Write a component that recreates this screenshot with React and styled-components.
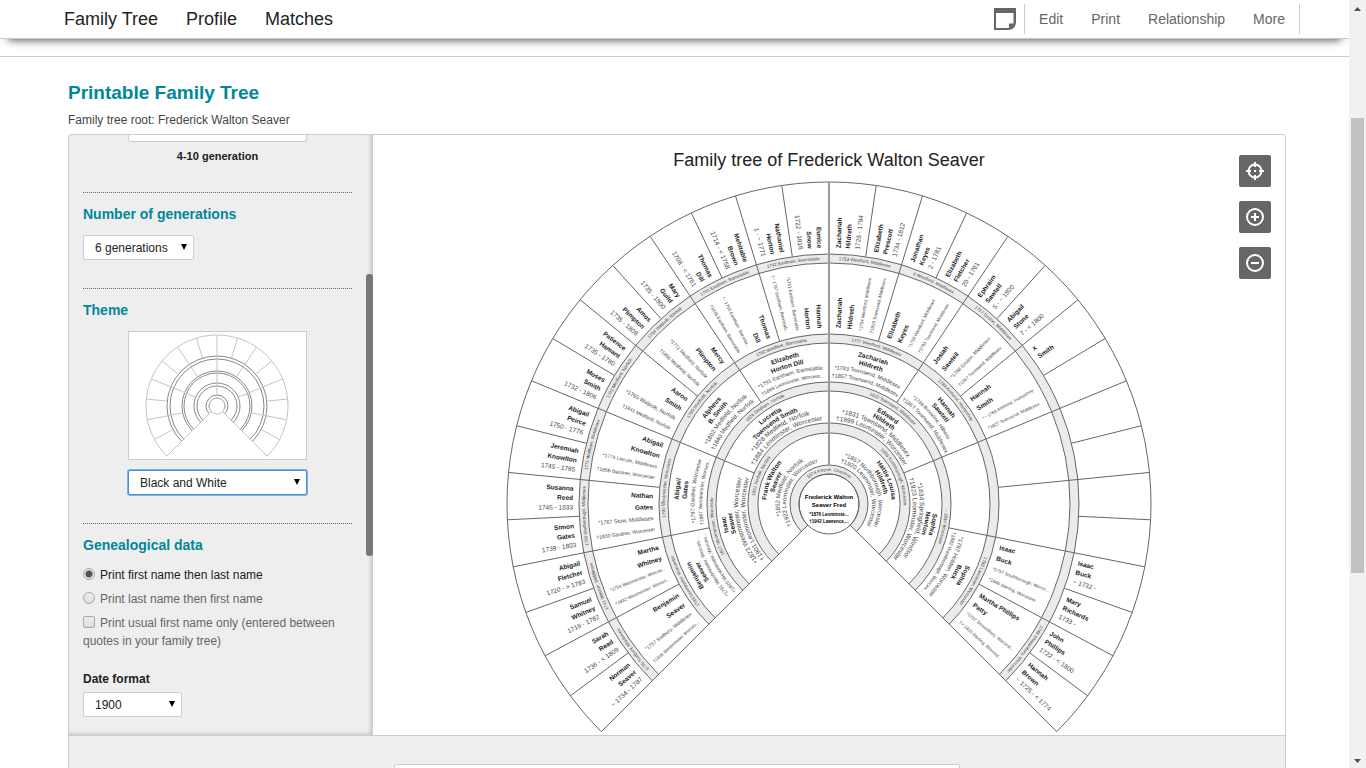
import React from 'react';
import styled, { createGlobalStyle } from 'styled-components';

const colors = {
  teal: '#00879a',
  text: '#222',
  grey: '#666',
  line: '#ccc',
  panel: '#eee',
}

const GlobalStyle = createGlobalStyle`
  * {
    box-sizing: border-box;
  }
  body {
    margin: 0;
    background: #fff;
    color: ${colors.text};
    font-family: "Liberation Sans", Arial, sans-serif;
    font-size: 12px;
  }
`

const Window = styled.div`
  display: flex;
  height: 100vh;
  overflow: hidden;
`
const Page = styled.div`
  flex: 1;
  min-width: 0;
  overflow: hidden;
`
const Header = styled.header`
  display: flex;
  align-items: center;
  justify-content: space-between;
  height: 39px;
  padding: 0 49px 0 64px;
  background: #fff;
  border-bottom: 1px solid ${colors.line};
  box-shadow: 0 9px 9px -8px rgba(0, 0, 0, 0.7);
`
const SubHeader = styled.div`
  height: 18px;
  border-bottom: 1px solid ${colors.line};
`
const MainNav = styled.nav`
  display: flex;
  gap: 28px;
`
const NavLink = styled.a`
  color: ${colors.text};
  font-size: 18px;
  line-height: 38px;
  text-decoration: none;
`
const Tools = styled.div`
  display: flex;
  align-items: center;
  gap: 8px;
`
const NoteButton = styled.button`
  width: 22px;
  height: 22px;
  padding: 0;
  border: 0;
  background: none;
`
const ToolNav = styled.nav`
  display: flex;
  gap: 28px;
  padding: 0 14px;
  border-left: 1px solid ${colors.line};
  border-right: 1px solid ${colors.line};
`
const ToolLink = styled.a`
  color: ${colors.grey};
  font-size: 14px;
  line-height: 30px;
  text-decoration: none;
`
const Content = styled.main`
  padding: 25px 63px 0 68px;
`
const PageTitle = styled.h1`
  margin: 0;
  color: ${colors.teal};
  font-size: 19px;
  line-height: 22px;
`
const RootPerson = styled.p`
  margin: 8px 0 6px;
  color: #444;
  line-height: 16px;
`
const Panel = styled.div`
  border: 1px solid ${colors.line};
  border-radius: 3px;
  overflow: hidden;
`
const Workspace = styled.div`
  display: flex;
`
const Sidebar = styled.aside`
  position: relative;
  flex: none;
  width: 304px;
  padding: 0 20px 18px 14px;
  background: ${colors.panel};
  border-right: 1px solid ${colors.line};
  box-shadow: inset -2px -2px 4px -1px rgba(0, 0, 0, 0.2);
`
const SidebarThumb = styled.div`
  position: absolute;
  top: 139px;
  right: -1px;
  width: 7px;
  height: 282px;
  border-radius: 3px;
  background: #777;
`
const Section = styled.section`
  padding: 10px 0 28px;
  border-top: 1px dotted ${colors.grey};
`
const FirstSection = styled.section`
  padding-bottom: 27px;
`
const LastSection = styled(Section)`
  padding-bottom: 0;
`
const TypePreview = styled.div`
  width: 179px;
  height: 7px;
  margin: 0 auto 6px;
  background: #fff;
  border: 1px solid ${colors.line};
  border-top: 0;
  border-radius: 0 0 3px 3px;
`
const TypeName = styled.div`
  font-size: 11px;
  font-weight: bold;
  line-height: 17px;
  text-align: center;
`
const SectionTitle = styled.h2`
  margin: 0 0 ${props => (props.$tight ? 6 : 9)}px;
  color: ${colors.teal};
  font-size: 14px;
  line-height: 23px;
`
const ThemePreview = styled.div`
  width: 179px;
  height: 129px;
  margin: 0 auto 10px;
  background: #fff;
  border: 1px solid ${colors.line};
  svg {
    display: block;
  }
`
const SelectBox = styled.div`
  position: relative;
  width: ${props => props.$width}px;
  margin: ${props => (props.$center ? '0 auto' : '0')};
  svg {
    position: absolute;
    top: 9px;
    right: 7px;
    pointer-events: none;
  }
`
const StyledSelect = styled.select`
  display: block;
  width: 100%;
  height: 25px;
  padding: 0 11px;
  appearance: none;
  background: #fff;
  border: 1px solid ${props => (props.$active ? '#4a90d9' : colors.line)};
  border-radius: 2px;
  box-shadow: ${props => (props.$active ? '0 0 0 1px #7fb2e8' : 'none')};
  color: ${colors.text};
  font-family: inherit;
  font-size: 12px;
  outline: 0;
`
const Option = styled.label`
  display: block;
  padding: 3px 0;
  color: ${props => (props.$active ? colors.text : colors.grey)};
  line-height: 18px;
`
const Tick = styled.input`
  appearance: none;
  width: 12px;
  height: 12px;
  margin: 0 5px 0 0;
  vertical-align: -1px;
  border: 1px solid #aaa;
  border-radius: ${props => (props.type === 'radio' ? '50%' : '2px')};
  background: linear-gradient(#eee, #ddd);
  &:checked {
    background: radial-gradient(circle, #555 0, #555 3px, #e6e6e6 4px);
  }
`
const FieldLabel = styled.label`
  display: block;
  margin: 18px 0 5px;
  font-weight: bold;
  line-height: 16px;
`
const Viewer = styled.div`
  position: relative;
  flex: 1;
  min-width: 0;
  padding-top: 14px;
  text-align: center;
`
const ChartTitle = styled.h2`
  margin: 0 0 9px;
  font-size: 18px;
  font-weight: normal;
  line-height: 22px;
`
const Chart = styled.svg`
  display: block;
  margin: 0 auto;
  font-family: "Liberation Sans", Arial, sans-serif;
`
const ZoomControls = styled.div`
  position: absolute;
  top: 20px;
  right: 14px;
  display: grid;
  gap: 14px;
`
const ZoomButton = styled.button`
  display: grid;
  place-items: center;
  width: 32px;
  height: 32px;
  padding: 0;
  border: 0;
  border-radius: 2px;
  background: ${colors.grey};
`
const Footer = styled.div`
  padding: 28px 20px;
  background: ${colors.panel};
  border-top: 1px solid ${colors.line};
`
const LinkInput = styled.input`
  display: block;
  width: 566px;
  max-width: 100%;
  height: 28px;
  margin: 0 auto;
  border: 1px solid ${colors.line};
  border-radius: 2px;
`
const Scrollbar = styled.div`
  display: flex;
  flex-direction: column;
  align-items: center;
  justify-content: space-between;
  width: 17px;
  padding: 7px 0 5px;
  background: #f1f1f1;
`
const ScrollTrack = styled.div`
  flex: 1;
  padding-top: 107px;
`
const ScrollThumb = styled.div`
  width: 13px;
  height: 455px;
  background: #c1c1c1;
`

// generations 2 to 6, in chart units (two to a pixel); band is the marriage strip inside each ring
// fit scales the place lines by their number of letters, between small and place
const RINGS = [
  { cells: 2, inner: 78, outer: 142, band: 60, place: 12, rows: [130, 116, 103, 90] },
  { cells: 4, inner: 162, outer: 226, band: 142, place: 13, rows: [213, 199, 186, 172] },
  { cells: 8, inner: 244, outer: 322, band: 226, fit: 265, small: 10, place: 12, rows: [305, 289, 273, 257] },
  { cells: 16, inner: 340, outer: 482, band: 322, fit: 235, small: 9, place: 11, start: 352, step: 3.6 },
  { cells: 32, inner: 500, outer: 644, band: 482, place: 13, start: 512, step: 2.1 },
]
const NAME_SIZE = 13
const BAND_SIZE = 9

// name lines first, then event lines
const PEOPLE = [
  [
    [['Frank Walton', 'Seaver'], ['*1852 Medfield, Norfolk', '†1922 Leominster, Worcester']],
    [['Hattie Louisa', 'Hildreth'], ['*1857 Northborough, Worcester', '†1920 Leominster, Worcester']],
  ],
  [
    [['Isaac', 'Seaver'], ['*1823 Westminster, Worcester', '†1901 Leominster, Worcester']],
    [['Lucretia', 'Townsend Smith'], ['*1828 Medfield, Norfolk', '†1884 Leominster, Worcester']],
    [['Edward', 'Hildreth'], ['*1831 Townsend, Middlesex', '†1899 Leominster, Worcester']],
    [['Sophia', 'Newton'], ['*1834 Springfield, Windsor', '†1923 Leominster, Worcester']],
  ],
  [
    [['Benjamin', 'Seaver'], ['*1791 Westminster, Worces...', '†1825 Westminster, Worces...']],
    [['Abigail', 'Gates'], ['*1797 Gardner, Worcester', '†1867 Westminster, Worces...']],
    [['Alpheus', 'B. Smith'], ['*1802 Medfield, Norfolk', '†1840 Medfield, Norfolk']],
    [['Elizabeth', 'Horton Dill'], ['*1791 Eastham, Barnstable', '†1869 Leominster, Worcest...']],
    [['Zachariah', 'Hildreth'], ['*1783 Townsend, Middlesex', '†1857 Townsend, Middlesex']],
    [['Hannah', 'Sawtell'], ['*1789 Brookline, Hillsbor...', '†1857 Townsend, Middlesex']],
    null,
    [['Sophia', 'Buck'], ['*1797 Holden, Worcester', '†1882 Westborough, Worces...']],
  ],
  [
    [['Benjamin', 'Seaver'], ['*1757 Sudbury, Middlesex', '†1816 Westminster, Worces...']],
    [['Martha', 'Whitney'], ['*1764 Westminster, Worces...', '†1832 Westminster, Worces...']],
    [['Nathan', 'Gates'], ['*1767 Stow, Middlesex', '†1830 Gardner, Worcester']],
    [['Abigail', 'Knowlton'], ['*1774 Lincoln, Middlesex', '†1856 Gardner, Worcester']],
    [['Aaron', 'Smith'], ['*1765 Walpole, Norfolk', '†1841 Medfield, Norfolk']],
    [['Mercy', 'Plimpton'], ['*1772 Medfield, Norfolk', '†1850 Medfield, Norfolk']],
    [['Thomas', 'Dill'], ['*~ 1755 Eastham, Barnsta...', '†1836 Eastham, Barnstable']],
    [['Hannah', 'Horton'], ['*1761 Eastham, Barnstable', '†~ 1797 Eastham, Barnstab...']],
    [['Zachariah', 'Hildreth'], ['*1754 Westford, Middlesex', '†1829 Townsend, Middlesex']],
    [['Elizabeth', 'Keyes'], ['*1759 Westford, Middlesex', '†1793 Townsend, Middlesex']],
    [['Josiah', 'Sawtell'], ['*1768 Groton, Middlesex', '†1847 Townsend, Middlesex']],
    [['Hannah', 'Smith'], ['*~ 1768 Amherst, Hampshire', '†1827 Townsend, Middlesex']],
    null,
    null,
    [['Isaac', 'Buck'], ['*1757 Southborough, Worce...', '†1846 Sterling, Worcester']],
    [['Martha Phillips', 'Patty'], ['*1757 Shrewsbury, Worcest...', '†> 1820 Sterling, Worcest...']],
  ],
  [
    [['Norman', 'Seaver'], ['~ 1734 - 1787']],
    [['Sarah', 'Read'], ['1736 - < 1809']],
    [['Samuel', 'Whitney'], ['1719 - 1782']],
    [['Abigail', 'Fletcher'], ['1720 - > 1783']],
    [['Simon', 'Gates'], ['1739 - 1803']],
    [['Susanna', 'Reed'], ['1745 - 1833']],
    [['Jeremiah', 'Knowlton'], ['1745 - 1785']],
    [['Abigail', 'Peirce'], ['1750 - 1776']],
    [['Moses', 'Smith'], ['1732 - 1806']],
    [['Patience', 'Hamant'], ['1735 - 1780']],
    [['Amos', 'Plimpton'], ['1735 - 1808']],
    [['Mary', 'Guild'], ['1735 - 1800']],
    [['Thomas', 'Dill'], ['1708 - < 1761']],
    [['Mehitable', 'Brown'], ['1714 - < 1758']],
    [['Nathaniel', 'Horton'], ['1 - ~ 1771']],
    [['Eunice', 'Snow'], ['1722 - 1816']],
    [['Zachariah', 'Hildreth'], ['1728 - 1784']],
    [['Elizabeth', 'Prescott'], ['1734 - 1812']],
    [['Jonathan', 'Keyes'], ['2 - 1781']],
    [['Elizabeth', 'Fletcher'], ['20 - 1761']],
    [['Ephraim', 'Sawtell'], ['5 - ~ 1800']],
    [['Abigail', 'Stone'], ['7 - < 1800']],
    [['x', 'Smith'], []],
    null,
    null,
    null,
    null,
    null,
    [['Isaac', 'Buck'], ['~ 1732 -']],
    [['Mary', 'Richards'], ['1733 -']],
    [['John', 'Phillips'], ['1722 - < 1800']],
    [['Hannah', 'Brown'], ['~ 1725 - < 1774']],
  ],
]

const MARRIAGES = [
  ['1874 Keene, Cheshire'],
  ['1851 Norfolk, Norfolk', '1856 Northborough, Worcester'],
  ['1817 Westminster, Worcester', '1826 Dedham, Norfolk', '1810 Townsend, Middlesex', '~ 1834 Worcester'],
  [
    '1783 Leominster, Worcester', '1790 Westminster, Worcester', '1795 Medfield, Norfolk', '1782 Wellfleet, Barnstable',
    '1777 Westford, Middlesex', '1789 Amherst, Hampshire', '', '1780 Lancaster, Worcester',
  ],
  [
    '1755 Sudbury, Middlesex', '1741 Weston, Middlesex', '1765 Marlborough, Middlesex', '1771 Waltham, Middlesex',
    '1762 Medfield, Norfolk', '1756 Walpole, Norfolk', '1733 Eastham, Barnstable', '1742 Eastham, Barnstable',
    '1753 Westford, Middlesex', '6 Westford, Middlesex', '1757 Groton, Middlesex', '', '', '', '',
    '1749 Shrewsbury, Worcester',
  ],
]

const SPAN = 270

// angles are in degrees clockwise from the top
function polar(radius, angle) {
  const rad = (angle * Math.PI) / 180
  return [radius * Math.sin(rad), -radius * Math.cos(rad)]
}

function arc(radius, from, to) {
  const large = to - from > 180 ? 1 : 0
  return `M${polar(radius, from)} A${radius} ${radius} 0 ${large} 1 ${polar(radius, to)}`
}

function spoke(inner, outer, angle) {
  return `M${polar(inner, angle)} L${polar(outer, angle)}`
}

function band(inner, outer) {
  const half = SPAN / 2
  return `${arc(outer, -half, half)} L${polar(inner, half)} A${inner} ${inner} 0 1 0 ${polar(inner, -half)} Z`
}

function middle(cells, index) {
  return -SPAN / 2 + (SPAN / cells) * (index + 0.5)
}

function placeSize(ring, line) {
  if (!ring.fit) return ring.place
  return Math.max(ring.small, Math.min(ring.place, Math.round(ring.fit / line.length)))
}

function CurvedText({ id, radius, angle, size, bold, children }) {
  const baseline = radius - size * 0.35
  return (
    <>
      <path id={id} d={arc(baseline, angle - 85, angle + 85)} fill="none" />
      <text fontSize={size} fontWeight={bold ? 'bold' : 'normal'} fill={bold ? '#222' : '#444'} textAnchor="middle">
        <textPath href={`#${id}`} startOffset="50%">{children}</textPath>
      </text>
    </>
  )
}

function RadialText({ radius, angle, size, bold, children }) {
  const [x, y] = polar(radius, angle)
  const left = angle < 0
  return (
    <text
      transform={`translate(${x} ${y}) rotate(${left ? angle + 90 : angle - 90})`}
      dy="0.35em"
      fontSize={size}
      fontWeight={bold ? 'bold' : 'normal'}
      fill={bold ? '#222' : '#444'}
      textAnchor={left ? 'end' : 'start'}
    >
      {children}
    </text>
  )
}

// On the left half a line reads inwards, so the first line is the most clockwise one;
// on the right half it reads outwards and the order turns round.
function lineAngle(ring, index, line, count) {
  const angle = middle(ring.cells, index)
  const fromMiddle = (line - (count - 1) / 2) * ring.step
  return angle < 0 ? angle - fromMiddle : angle + fromMiddle
}

function Person({ ring, ringIndex, index, person }) {
  const [names, events] = person
  const lines = [...names, ...events]
  const count = ring.cells === 32 ? 3 : 4

  return lines.map((line, i) => {
    const bold = i < names.length
    const size = bold ? NAME_SIZE : placeSize(ring, line)
    if (ring.rows) {
      return (
        <CurvedText
          key={i}
          id={`p${ringIndex}-${index}-${i}`}
          radius={ring.rows[i]}
          angle={middle(ring.cells, index)}
          size={size}
          bold={bold}
        >
          {line}
        </CurvedText>
      )
    }
    return (
      <RadialText key={i} radius={ring.start} angle={lineAngle(ring, index, i, count)} size={size} bold={bold}>
        {line}
      </RadialText>
    )
  })
}

function FanLines({ rings, center, stroke, bandStroke, fill, width }) {
  const outer = rings[rings.length - 1].outer
  return (
    <g fill="none" stroke={stroke} strokeWidth={width}>
      {rings.map(ring => (
        <path key={ring.band} d={band(ring.band, ring.inner)} fill={fill} stroke={bandStroke} />
      ))}
      {rings.map((ring, r) => (
        <g key={ring.cells}>
          {Array.from({ length: ring.cells - 1 }, (_, i) => {
            const angle = -SPAN / 2 + (SPAN / ring.cells) * (i + 1)
            const shared = r > 0 && (i + 1) % 2 === 0
            return <path key={i} d={spoke(shared ? ring.band : ring.inner, ring.outer, angle)} />
          })}
        </g>
      ))}
      <path d={arc(outer, -SPAN / 2, SPAN / 2)} />
      <path d={spoke(center, outer, -SPAN / 2)} />
      <path d={spoke(center, outer, SPAN / 2)} />
      <circle r={center} />
    </g>
  )
}

function FanChart() {
  return (
    <Chart width="648" height="554" viewBox="-648 -648 1296 1108" role="img" aria-label="Fan chart">
      <FanLines rings={RINGS} center={60} stroke="#666" bandStroke="#666" fill="#ebebeb" width={2} />
      <path d={spoke(78, 644, 0)} stroke="#999" strokeWidth="4" />
      <g>
        {RINGS.map((ring, r) => (
          <g key={ring.cells}>
            {MARRIAGES[r].map((text, i) => text && (
              <CurvedText
                key={i}
                id={`m${r}-${i}`}
                radius={(ring.band + ring.inner) / 2}
                angle={middle(ring.cells / 2, i)}
                size={BAND_SIZE}
              >
                {text}
              </CurvedText>
            ))}
            {PEOPLE[r].map((person, i) => person && (
              <Person key={i} ring={ring} ringIndex={r} index={i} person={person} />
            ))}
          </g>
        ))}
      </g>
      <g textAnchor="middle" fontWeight="bold" fill="#000">
        <text y="-10" fontSize="12">Frederick Walton</text>
        <text y="6" fontSize="12">Seaver Fred</text>
        <text y="23" fontSize="9">*1876 Leominste...</text>
        <text y="37" fontSize="9">†1942 Lawrence,...</text>
      </g>
    </Chart>
  )
}

const PREVIEW_RINGS = [
  { cells: 2, band: 8, inner: 11, outer: 20 },
  { cells: 4, band: 20, inner: 23, outer: 33 },
  { cells: 8, band: 33, inner: 35, outer: 47 },
  { cells: 16, band: 47, inner: 50, outer: 71 },
]

function Select({ id, label, width, center, active, value }) {
  return (
    <SelectBox $width={width} $center={center}>
      <StyledSelect id={id} aria-label={label} $active={active} defaultValue={value}>
        <option>{value}</option>
      </StyledSelect>
      <svg width="6" height="6" viewBox="0 0 6 6" aria-hidden="true">
        <path d="M0 0h6L3 6z" fill="#000" />
      </svg>
    </SelectBox>
  )
}

function NoteIcon() {
  return (
    <svg width="22" height="22" viewBox="0 0 22 22" aria-hidden="true">
      <path fillRule="evenodd" d="M0 0h22v15q-1 6-7 7H0z M2 5v15h13v-4.500h4.500V5z" fill="#666" />
    </svg>
  )
}

function ZoomIcon({ type }) {
  return (
    <svg width="20" height="20" viewBox="0 0 20 20" fill="none" stroke="#fff" strokeWidth="2" aria-hidden="true">
      {type === 'center' && (
        <>
          <circle cx="10" cy="10" r="6.500" />
          <path d="M10 1v5M10 14v5M1 10h5M14 10h5M9 10h2" />
        </>
      )}
      {type !== 'center' && <circle cx="10" cy="10" r="8" />}
      {type === 'in' && <path d="M10 6v8M6 10h8" />}
      {type === 'out' && <path d="M6 10h8" />}
    </svg>
  )
}

export default function App() {
  return (
    <Window>
      <GlobalStyle />
      <Page>
        <Header>
          <MainNav>
            <NavLink href="#tree">Family Tree</NavLink>
            <NavLink href="#profile">Profile</NavLink>
            <NavLink href="#matches">Matches</NavLink>
          </MainNav>
          <Tools>
            <NoteButton aria-label="Notes"><NoteIcon /></NoteButton>
            <ToolNav>
              <ToolLink href="#edit">Edit</ToolLink>
              <ToolLink href="#print">Print</ToolLink>
              <ToolLink href="#relationship">Relationship</ToolLink>
              <ToolLink href="#more">More</ToolLink>
            </ToolNav>
          </Tools>
        </Header>
        <SubHeader />
        <Content>
          <PageTitle>Printable Family Tree</PageTitle>
          <RootPerson>Family tree root: Frederick Walton Seaver</RootPerson>
          <Panel>
            <Workspace>
              <Sidebar>
                <FirstSection>
                  <TypePreview />
                  <TypeName>4-10 generation</TypeName>
                </FirstSection>
                <Section>
                  <SectionTitle>Number of generations</SectionTitle>
                  <Select label="Number of generations" width={111} value="6 generations" />
                </Section>
                <Section>
                  <SectionTitle>Theme</SectionTitle>
                  <ThemePreview>
                    <svg width="177" height="127" viewBox="-88 -74 177 127" aria-hidden="true">
                      <FanLines rings={PREVIEW_RINGS} center={8} stroke="#c4c4c4" bandStroke="#888" fill="#fff" width={1} />
                    </svg>
                  </ThemePreview>
                  <Select label="Theme" width={179} center active value="Black and White" />
                </Section>
                <LastSection>
                  <SectionTitle $tight>Genealogical data</SectionTitle>
                  <Option $active>
                    <Tick type="radio" name="order" defaultChecked />
                    Print first name then last name
                  </Option>
                  <Option>
                    <Tick type="radio" name="order" />
                    Print last name then first name
                  </Option>
                  <Option>
                    <Tick type="checkbox" />
                    Print usual first name only (entered between quotes in your family tree)
                  </Option>
                  <FieldLabel htmlFor="date-format">Date format</FieldLabel>
                  <Select id="date-format" width={99} value="1900" />
                </LastSection>
                <SidebarThumb />
              </Sidebar>
              <Viewer>
                <ChartTitle>Family tree of Frederick Walton Seaver</ChartTitle>
                <FanChart />
                <ZoomControls>
                  <ZoomButton aria-label="Center"><ZoomIcon type="center" /></ZoomButton>
                  <ZoomButton aria-label="Zoom in"><ZoomIcon type="in" /></ZoomButton>
                  <ZoomButton aria-label="Zoom out"><ZoomIcon type="out" /></ZoomButton>
                </ZoomControls>
              </Viewer>
            </Workspace>
            <Footer>
              <LinkInput aria-label="Tree link" />
            </Footer>
          </Panel>
        </Content>
      </Page>
      <Scrollbar>
        <svg width="7" height="4" viewBox="0 0 7 4" aria-hidden="true"><path d="M0 4L3.500 0 7 4z" fill="#505050" /></svg>
        <ScrollTrack>
          <ScrollThumb />
        </ScrollTrack>
        <svg width="7" height="4" viewBox="0 0 7 4" aria-hidden="true"><path d="M0 0L3.500 4 7 0z" fill="#505050" /></svg>
      </Scrollbar>
    </Window>
  )
}
